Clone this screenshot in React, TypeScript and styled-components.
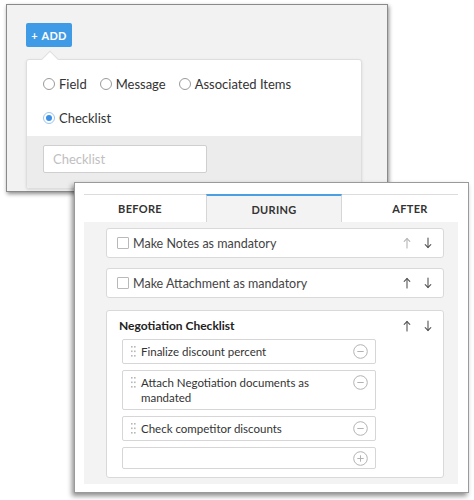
import React from 'react';
import styled, {createGlobalStyle} from "styled-components";

const GlobalStyle = createGlobalStyle`
  body {
    margin: 0;
    background: #ffffff;
    font-family: Lato, "Liberation Sans", sans-serif;
    color: #333333;
  }
  * {
    box-sizing: border-box;
  }
`

type ChecklistItem = {
    text: string
}

const checklist: Array<ChecklistItem> = [
    {text: 'Finalize discount percent'},
    {text: 'Attach Negotiation documents as mandated'},
    {text: 'Check competitor discounts'},
]

const Arrow = (props: { down?: boolean, faded?: boolean }) => (
    <svg width="8" height="12" viewBox="0 0 8 12" style={{transform: props.down ? 'rotate(180deg)' : undefined}}>
        <g stroke={props.faded ? '#b5b5b5' : '#555555'} strokeWidth="1.1" fill="none" strokeLinecap="round">
            <path d="M4 1.5 V11"/>
            <path d="M1.2 4.3 L4 1.5 L6.8 4.3"/>
        </g>
    </svg>
)

const Grip = () => (
    <svg width="5" height="11" viewBox="0 0 5 11">
        <g fill="#b8b8b8">
            <rect x="0" y="0" width="1.6" height="1.6"/>
            <rect x="3" y="0" width="1.6" height="1.6"/>
            <rect x="0" y="4.5" width="1.6" height="1.6"/>
            <rect x="3" y="4.5" width="1.6" height="1.6"/>
            <rect x="0" y="9" width="1.6" height="1.6"/>
            <rect x="3" y="9" width="1.6" height="1.6"/>
        </g>
    </svg>
)

const RoundIcon = (props: { plus?: boolean }) => (
    <svg width="15" height="15" viewBox="0 0 15 15">
        <g stroke="#b3b3b3" strokeWidth="1" fill="none">
            <circle cx="7.5" cy="7.5" r="6.8"/>
            <path d="M4.3 7.5 H10.7"/>
            {props.plus && <path d="M7.5 4.3 V10.7"/>}
        </g>
    </svg>
)

const Moves = (props: { firstFaded?: boolean }) => (
    <MoveButtons>
        <Arrow faded={props.firstFaded}/>
        <Arrow down/>
    </MoveButtons>
)

export default function App() {
    return (
        <Page>
            <GlobalStyle/>
            <AddPanel>
                <AddButton>+ ADD</AddButton>
                <Popover>
                    <Options>
                        <OptionRow>
                            <Option><Radio/>Field</Option>
                            <Option><Radio/>Message</Option>
                            <Option><Radio/>Associated Items</Option>
                        </OptionRow>
                        <OptionRow>
                            <Option><Radio $checked/>Checklist</Option>
                        </OptionRow>
                    </Options>
                    <InputArea>
                        <NameInput placeholder="Checklist"/>
                    </InputArea>
                </Popover>
            </AddPanel>

            <StagePanel>
                <Tabs>
                    <Tab $shift={-10}>BEFORE</Tab>
                    <Tab $active>DURING</Tab>
                    <Tab $shift={20}>AFTER</Tab>
                </Tabs>
                <TabBody>
                    <RuleCard>
                        <CheckBox/>
                        <RuleText>Make Notes as mandatory</RuleText>
                        <Moves firstFaded/>
                    </RuleCard>
                    <RuleCard>
                        <CheckBox/>
                        <RuleText>Make Attachment as mandatory</RuleText>
                        <Moves/>
                    </RuleCard>
                    <ChecklistCard>
                        <ChecklistHeader>
                            <ChecklistTitle>Negotiation Checklist</ChecklistTitle>
                            <Moves/>
                        </ChecklistHeader>
                        <ItemList>
                            {checklist.map((item) => (
                                <Item key={item.text}>
                                    <Handle><Grip/></Handle>
                                    <ItemText>{item.text}</ItemText>
                                    <ItemAction><RoundIcon/></ItemAction>
                                </Item>
                            ))}
                            <NewItem>
                                <ItemAction><RoundIcon plus/></ItemAction>
                            </NewItem>
                        </ItemList>
                    </ChecklistCard>
                </TabBody>
            </StagePanel>
        </Page>
    );
}

const Page = styled.div`
  position: relative;
  width: 474px;
  height: 500px;
  padding: 5px 0 0 7px;
  overflow: hidden;
`
const AddPanel = styled.section`
  width: 380px;
  height: 186px;
  background: #f2f2f2;
  padding: 18px 0 0 19px;
  box-shadow: 0 0 0 1px #8a8a8a, 1px 2px 4px 1px rgba(0, 0, 0, 0.45);
`
const AddButton = styled.button`
  display: block;
  width: 46px;
  height: 24px;
  border: none;
  border-radius: 2px;
  background: #3f9be6;
  color: #ffffff;
  font-family: Lato, "Liberation Sans", sans-serif;
  font-size: 11px;
  font-weight: 700;
  letter-spacing: 0.3px;
  word-spacing: 1px;
  padding: 0;
`
const Popover = styled.div`
  position: relative;
  margin-top: 12px;
  width: 336px;
  height: 130px;
  background: #ffffff;
  border: 1px solid #dedede;
  border-radius: 3px;
  box-shadow: 0 1px 3px rgba(0, 0, 0, 0.1);

  &::before {
    content: '';
    position: absolute;
    top: -7px;
    left: 17px;
    width: 11px;
    height: 11px;
    background: #ffffff;
    border-top: 1px solid #dedede;
    border-left: 1px solid #dedede;
    transform: rotate(45deg);
  }
`
const Options = styled.div`
  display: flex;
  flex-direction: column;
  gap: 14px;
  height: 76px;
  padding: 14px 16px 0;
`
const OptionRow = styled.div`
  display: flex;
  gap: 13px;
`
const Option = styled.label`
  display: flex;
  align-items: center;
  gap: 4px;
  height: 20px;
  font-size: 13px;
  color: #333333;
`
const Radio = styled.span<{ $checked?: boolean }>`
  position: relative;
  width: 12px;
  height: 12px;
  border-radius: 50%;
  border: 1px solid ${p => p.$checked ? '#9cc5ee' : '#9a9a9a'};
  background: #ffffff;

  &::after {
    content: '';
    display: ${p => p.$checked ? 'block' : 'none'};
    position: absolute;
    top: 2px;
    left: 2px;
    width: 6px;
    height: 6px;
    border-radius: 50%;
    background: #3b8fe4;
  }
`
const InputArea = styled.div`
  height: 52px;
  background: #ececec;
  padding: 9px 16px;
  border-radius: 0 0 3px 3px;
`
const NameInput = styled.input`
  width: 164px;
  height: 28px;
  border: 1px solid #cfcfcf;
  border-radius: 2px;
  background: #ffffff;
  padding: 0 9px;
  font-family: Lato, "Liberation Sans", sans-serif;
  font-size: 13px;

  &::placeholder {
    color: #c0c0c0;
  }
`

const StagePanel = styled.section`
  position: absolute;
  left: 75px;
  top: 183px;
  width: 393px;
  height: 309px;
  background: #ffffff;
  padding: 11px 10px 8px 9px;
  display: flex;
  flex-direction: column;
  box-shadow: 0 0 0 1px #9a9a9a, -2px 3px 5px 1px rgba(0, 0, 0, 0.45);
`
const Tabs = styled.div`
  display: grid;
  grid-template-columns: 122px 136px 116px;
  height: 28px;
`
const Tab = styled.div<{ $active?: boolean, $shift?: number }>`
  display: flex;
  align-items: center;
  justify-content: center;
  padding-left: ${p => p.$shift && p.$shift > 0 ? p.$shift : 0}px;
  padding-right: ${p => p.$shift && p.$shift < 0 ? -p.$shift : 0}px;
  font-size: 11px;
  font-weight: 700;
  letter-spacing: 0.3px;
  color: #333333;
  background: ${p => p.$active ? '#f3f3f3' : '#ffffff'};
  border-top: ${p => p.$active ? '2px solid #4a9fe3' : '1px solid #dcdcdc'};
  border-left: ${p => p.$active ? '1px solid #d6d6d6' : 'none'};
  border-right: ${p => p.$active ? '1px solid #d6d6d6' : 'none'};
`
const TabBody = styled.div`
  flex: 1;
  background: #f3f3f3;
  padding: 6px 14px 0 22px;
  display: flex;
  flex-direction: column;
  gap: 10px;
`
const RuleCard = styled.div`
  display: flex;
  align-items: center;
  height: 30px;
  background: #ffffff;
  border: 1px solid #d9d9d9;
  border-radius: 3px;
  padding: 0 11px 0 10px;
`
const CheckBox = styled.span`
  width: 12px;
  height: 12px;
  border: 1px solid #b9b9b9;
  border-radius: 1px;
  margin-right: 4px;
`
const RuleText = styled.span`
  flex: 1;
  font-size: 12.5px;
  color: #444444;
`
const MoveButtons = styled.div`
  display: flex;
  gap: 13px;
`
const ChecklistCard = styled.div`
  margin-top: 2px;
  height: 168px;
  background: #ffffff;
  border: 1px solid #d9d9d9;
  border-radius: 3px;
  padding: 6px 11px 0 12px;
`
const ChecklistHeader = styled.div`
  display: flex;
  align-items: center;
  justify-content: space-between;
  height: 17px;
`
const ChecklistTitle = styled.span`
  font-size: 12px;
  font-weight: 700;
  color: #222222;
`
const ItemList = styled.div`
  width: 254px;
  margin: 5px 0 0 3px;
  display: flex;
  flex-direction: column;
  gap: 6px;
`
const Item = styled.div`
  display: flex;
  align-items: flex-start;
  background: #ffffff;
  border: 1px solid #d6d6d6;
  border-radius: 2px;
  padding: 4px 7px 4px 8px;
  min-height: 25px;
`
const Handle = styled.span`
  display: flex;
  padding-top: 2px;
  width: 10px;
`
const ItemText = styled.span`
  flex: 1;
  max-width: 200px;
  font-size: 11.5px;
  line-height: 15px;
  color: #333333;
`
const ItemAction = styled.span`
  margin-left: auto;
  display: flex;
`
const NewItem = styled.div`
  display: flex;
  align-items: center;
  height: 22px;
  border: 1px solid #d6d6d6;
  border-radius: 2px;
  padding: 0 7px;
`
